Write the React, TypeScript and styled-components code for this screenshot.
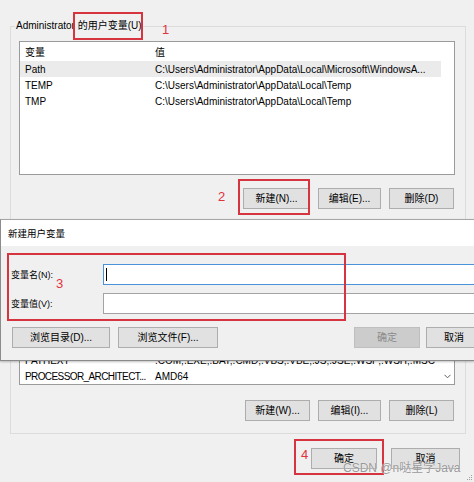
import React from "react";
import styled, { createGlobalStyle } from "styled-components";

const Global = createGlobalStyle`
  html, body { margin: 0; padding: 0; background: #f0f0f0; }
  body {
    font-family: "Liberation Sans", "Noto Sans CJK SC", sans-serif;
    font-size: 10px;
    color: #000;
  }
  * { box-sizing: border-box; }
`;

const Screen = styled.div`
  position: relative;
  width: 474px;
  height: 482px;
  overflow: hidden;
  background: #f0f0f0;
  display: flex;
  flex-direction: column;
`;

const TopPane = styled.section`
  height: 219px;
  flex: none;
  padding: 19px 8px 0 10px;
  overflow: hidden;
`;

const Group = styled.fieldset`
  margin: 0;
  padding: 0 10px 0 8px;
  border: 1px solid #dcdcdc;
  border-bottom: none;
  min-width: 0;
  height: 240px;
`;

const Legend = styled.legend`
  margin-left: -4px;
  padding: 0 1px;
  font-size: 10px;
  line-height: 14px;
`;

const ListBox = styled.div<{ $h: number; $tail?: boolean }>`
  height: ${(p) => p.$h}px;
  margin-top: ${(p) => (p.$tail ? 0 : 8)}px;
  border: 1px solid #9b9b9b;
  border-top: ${(p) => (p.$tail ? "none" : "1px solid #9b9b9b")};
  background: #fff;
  display: flex;
  overflow: hidden;
`;

const Rows = styled.div<{ $shift?: number }>`
  flex: 1;
  min-width: 0;
  margin-top: ${(p) => p.$shift ?? 0}px;
`;

const ScrollCol = styled.div`
  width: 13px;
  flex: none;
  display: flex;
  flex-direction: column;
  justify-content: flex-end;
  align-items: center;
  padding-bottom: 5px;
`;

const Row = styled.div<{ $head?: boolean; $selected?: boolean }>`
  display: flex;
  align-items: center;
  height: ${(p) => (p.$head ? 19 : 16)}px;
  background: ${(p) => (p.$selected ? "#ebebeb" : "transparent")};
  white-space: nowrap;
`;

const KeyCell = styled.span<{ $tight?: boolean }>`
  width: 135px;
  flex: none;
  padding-left: 5px;
  overflow: hidden;
  letter-spacing: ${(p) => (p.$tight ? "-0.6px" : "normal")};
`;

const ValCell = styled.span`
  flex: 1;
  min-width: 0;
  overflow: hidden;
`;

const ButtonRow = styled.div<{ $top: number; $gap: number; $right: number }>`
  display: flex;
  justify-content: flex-end;
  gap: ${(p) => p.$gap}px;
  margin-top: ${(p) => p.$top}px;
  padding-right: ${(p) => p.$right}px;
`;

const Btn = styled.button<{ $w: number; $off?: boolean; $push?: number }>`
  width: ${(p) => p.$w}px;
  height: 21px;
  flex: none;
  margin: 0 0 0 ${(p) => p.$push ?? 0}px;
  padding: 0;
  border: 1px solid ${(p) => (p.$off ? "#bfbfbf" : "#adadad")};
  background: ${(p) => (p.$off ? "#cccccc" : "#e1e1e1")};
  color: ${(p) => (p.$off ? "#8a8a8a" : "#000")};
  font: inherit;
  font-size: 10px;
  line-height: 19px;
`;

const Dialog = styled.section`
  position: relative;
  z-index: 1;
  height: 142px;
  flex: none;
  border-top: 1px solid #a6a6a6;
  border-left: 1px solid #8c8c8c;
  border-bottom: 1px solid #8a8a8a;
  box-shadow: 0 1px 2px rgba(0, 0, 0, 0.25);
  background: #f0f0f0;
  display: flex;
  flex-direction: column;
  overflow: hidden;
`;

const TitleBar = styled.div`
  height: 26px;
  flex: none;
  background: #fff;
  padding-left: 7px;
  display: flex;
  align-items: center;
  font-size: 9.5px;
`;

const Form = styled.div`
  display: flex;
  flex-direction: column;
  gap: 8px;
  padding: 18px 0 0 10px;
`;

const Field = styled.div`
  display: flex;
  align-items: center;
  height: 21px;
`;

const Label = styled.label`
  width: 92px;
  flex: none;
  font-size: 9px;
`;

const Input = styled.div<{ $focused?: boolean }>`
  width: 400px;
  height: 21px;
  flex: none;
  background: #fff;
  border: 1px solid ${(p) => (p.$focused ? "#4a93d8" : "#a3a3a3")};
  display: flex;
  align-items: center;
`;

const Caret = styled.span`
  width: 1px;
  height: 13px;
  margin-left: 2px;
  background: #000;
`;

const DialogButtons = styled.div`
  display: flex;
  gap: 8px;
  margin-top: 13px;
  padding-left: 11px;
`;

const BottomPane = styled.section`
  flex: 1;
  padding: 0 8px 0 10px;
  display: flex;
  flex-direction: column;
`;

const GroupTail = styled.div`
  height: 73px;
  flex: none;
  border: 1px solid #dcdcdc;
  border-top: none;
  padding: 0 10px 0 8px;
`;

const Mark = styled.div<{ $x: number; $y: number; $w: number; $h: number }>`
  position: absolute;
  left: ${(p) => p.$x}px;
  top: ${(p) => p.$y}px;
  width: ${(p) => p.$w}px;
  height: ${(p) => p.$h}px;
  border: 2px solid #d6343f;
  z-index: 5;
`;

const Num = styled.span<{ $x: number; $y: number }>`
  position: absolute;
  left: ${(p) => p.$x}px;
  top: ${(p) => p.$y}px;
  z-index: 5;
  color: #e2323e;
  font-family: "Liberation Sans", sans-serif;
  font-size: 13px;
  line-height: 16px;
`;

const Watermark = styled.span`
  position: absolute;
  left: 343px;
  top: 460px;
  z-index: 6;
  color: rgba(140, 140, 140, 0.9);
  text-shadow: 0 0 1px #fff;
  font-family: "Liberation Sans", "Noto Sans CJK SC", sans-serif;
  font-size: 12px;
  line-height: 16px;
  white-space: nowrap;
`;

const Grip = styled.svg`
  position: absolute;
  right: 1px;
  bottom: 1px;
  z-index: 6;
`;

const userVars = [
  { k: "Path", v: "C:\\Users\\Administrator\\AppData\\Local\\Microsoft\\WindowsA...", sel: true },
  { k: "TEMP", v: "C:\\Users\\Administrator\\AppData\\Local\\Temp" },
  { k: "TMP", v: "C:\\Users\\Administrator\\AppData\\Local\\Temp" },
];

const sysVars = [
  { k: "PATHEXT", v: ".COM;.EXE;.BAT;.CMD;.VBS;.VBE;.JS;.JSE;.WSF;.WSH;.MSC" },
  { k: "PROCESSOR_ARCHITECT...", v: "AMD64", tight: true },
];

export default function App() {
  return (
    <>
      <Global />
      <Screen>
        <TopPane>
          <Group>
            <Legend>Administrator 的用户变量(U)</Legend>
            <ListBox $h={134}>
              <Rows>
                <Row $head>
                  <KeyCell>变量</KeyCell>
                  <ValCell>值</ValCell>
                </Row>
                {userVars.map((r) => (
                  <Row key={r.k} $selected={r.sel}>
                    <KeyCell>{r.k}</KeyCell>
                    <ValCell>{r.v}</ValCell>
                  </Row>
                ))}
              </Rows>
              <ScrollCol />
            </ListBox>
            <ButtonRow $top={13} $gap={8} $right={1}>
              <Btn $w={67}>新建(N)...</Btn>
              <Btn $w={63}>编辑(E)...</Btn>
              <Btn $w={65}>删除(D)</Btn>
            </ButtonRow>
          </Group>
        </TopPane>

        <Dialog>
          <TitleBar>新建用户变量</TitleBar>
          <Form>
            <Field>
              <Label>变量名(N):</Label>
              <Input $focused>
                <Caret />
              </Input>
            </Field>
            <Field>
              <Label>变量值(V):</Label>
              <Input />
            </Field>
          </Form>
          <DialogButtons>
            <Btn $w={98}>浏览目录(D)...</Btn>
            <Btn $w={100}>浏览文件(F)...</Btn>
            <Btn $w={66} $off $push={128}>确定</Btn>
            <Btn $w={56} $push={-2}>取消</Btn>
          </DialogButtons>
        </Dialog>

        <BottomPane>
          <GroupTail>
            <ListBox $h={24} $tail>
              <Rows $shift={-9}>
                {sysVars.map((r) => (
                  <Row key={r.k}>
                    <KeyCell $tight={r.tight}>{r.k}</KeyCell>
                    <ValCell>{r.v}</ValCell>
                  </Row>
                ))}
              </Rows>
              <ScrollCol>
                <svg width="7" height="5" viewBox="0 0 7 5">
                  <path d="M0.5 0.8 L3.5 3.8 L6.5 0.8" fill="none" stroke="#606060" strokeWidth="1" />
                </svg>
              </ScrollCol>
            </ListBox>
            <ButtonRow $top={15} $gap={8} $right={1}>
              <Btn $w={65}>新建(W)...</Btn>
              <Btn $w={63}>编辑(I)...</Btn>
              <Btn $w={65}>删除(L)</Btn>
            </ButtonRow>
          </GroupTail>
          <ButtonRow $top={14} $gap={14} $right={6}>
            <Btn $w={66}>确定</Btn>
            <Btn $w={69}>取消</Btn>
          </ButtonRow>
        </BottomPane>

        <Mark $x={73} $y={12} $w={70} $h={28} />
        <Num $x={162} $y={22}>1</Num>
        <Mark $x={238} $y={179} $w={72} $h={36} />
        <Num $x={218} $y={189}>2</Num>
        <Mark $x={7} $y={253} $w={339} $h={68} />
        <Num $x={56} $y={276}>3</Num>
        <Mark $x={294} $y={439} $w={90} $h={36} />
        <Num $x={301} $y={447}>4</Num>

        <Watermark>CSDN @n哒星学Java</Watermark>
        <Grip width="8" height="8" viewBox="0 0 8 8">
          <rect x="6" y="2" width="1" height="1" fill="#a0a0a0" />
          <rect x="4" y="4" width="1" height="1" fill="#a0a0a0" />
          <rect x="6" y="4" width="1" height="1" fill="#a0a0a0" />
          <rect x="2" y="6" width="1" height="1" fill="#a0a0a0" />
          <rect x="4" y="6" width="1" height="1" fill="#a0a0a0" />
          <rect x="6" y="6" width="1" height="1" fill="#a0a0a0" />
        </Grip>
      </Screen>
    </>
  );
}
